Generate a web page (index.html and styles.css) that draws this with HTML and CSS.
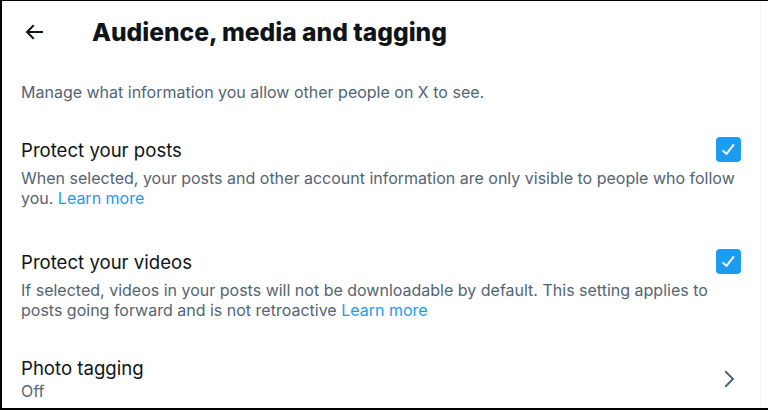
FILE: index.html
```html
<!DOCTYPE html>
<html lang="en">
<head>
  <meta charset="UTF-8">
  <meta name="viewport" content="width=device-width, initial-scale=1.0">
  <title>Audience, media and tagging</title>
  <link rel="stylesheet" href="styles.css">
</head>
<body>
  <div class="frame">
    <main class="column">

      <!-- Header -->
      <header class="page-header">
        <button class="back-button" aria-label="Back">
          <svg viewBox="0 0 24 24" width="24" height="24">
            <path d="M7.414 13l5.043 5.04-1.414 1.42L3.586 12l7.457-7.46 1.414 1.42L7.414 11H21v2H7.414z"></path>
          </svg>
        </button>
        <h1>Audience, media and tagging</h1>
      </header>

      <p class="intro">Manage what information you allow other people on X to see.</p>

      <!-- Protect posts -->
      <label class="setting">
        <div class="setting-head">
          <span class="setting-title">Protect your posts</span>
          <span class="checkbox">
            <svg viewBox="0 0 24 24" width="19" height="19">
              <path d="M9.64 18.952l-5.55-4.861 1.317-1.504 3.951 3.459 8.459-10.948L19.4 6.32 9.64 18.952z"></path>
            </svg>
          </span>
        </div>
        <p class="setting-desc">When selected, your posts and other account information are only visible to people who follow you. <a href="#">Learn more</a></p>
      </label>

      <!-- Protect videos -->
      <label class="setting">
        <div class="setting-head">
          <span class="setting-title">Protect your videos</span>
          <span class="checkbox">
            <svg viewBox="0 0 24 24" width="19" height="19">
              <path d="M9.64 18.952l-5.55-4.861 1.317-1.504 3.951 3.459 8.459-10.948L19.4 6.32 9.64 18.952z"></path>
            </svg>
          </span>
        </div>
        <p class="setting-desc">If selected, videos in your posts will not be downloadable by default. This setting applies to posts going forward and is not retroactive <a href="#">Learn more</a></p>
      </label>

      <!-- Photo tagging -->
      <a class="link-row" href="#">
        <div>
          <div class="setting-title">Photo tagging</div>
          <div class="link-value">Off</div>
        </div>
        <svg class="chevron" viewBox="0 0 24 24" width="24" height="24">
          <path d="M14.586 12L7.543 4.96l1.414-1.42L17.414 12l-8.457 8.46-1.414-1.42L14.586 12z"></path>
        </svg>
      </a>

    </main>
  </div>
</body>
</html>
```

FILE: styles.css
```css
/* General */
* {
  box-sizing: border-box;
}

body {
  margin: 0;
  font-family: 'Inter', 'Noto Sans', sans-serif;
  color: #0f1419;
  background: #fff;
}

.frame {
  height: 410px;
  border-top: 1px solid #000;
  border-left: 2px solid #000;
  border-bottom: 2px solid #000;
  overflow: hidden;
}

.column {
  width: 759px;
  height: 100%;
  border-right: 1px solid #eff3f4;
}

/* Header */
.page-header {
  display: flex;
  align-items: center;
  height: 62px;
  padding: 0 19px 0 12px;
}

.back-button {
  width: 40px;
  height: 40px;
  margin-right: 38px;
  padding: 0;
  border: none;
  background: none;
  display: flex;
  align-items: center;
  justify-content: center;
}

.back-button svg {
  fill: #0f1419;
}

.page-header h1 {
  margin: 0;
  font-size: 24.6px;
  font-weight: 800;
}

/* Intro text */
.intro {
  margin: 0;
  padding: 19px 19px 16px;
  font-size: 16px;
  color: #536471;
}

/* Setting rows */
.setting {
  display: block;
  padding: 19px 19px 22px;
  cursor: pointer;
}

.setting-head {
  display: flex;
  align-items: center;
  justify-content: space-between;
}

.setting-title {
  font-size: 18.6px;
}

.checkbox {
  width: 25px;
  height: 25px;
  border-radius: 4px;
  background: #1d9bf0;
  display: flex;
  align-items: center;
  justify-content: center;
}

.checkbox svg {
  fill: #fff;
  stroke: #fff;
  stroke-width: 0.6px;
}

.setting-desc {
  margin: 6px 0 0;
  font-size: 16px;
  line-height: 20px;
  color: #536471;
}

.setting-desc a {
  color: #1d9bf0;
  text-decoration: none;
}

/* Link row */
.link-row {
  display: flex;
  align-items: center;
  justify-content: space-between;
  padding: 15px 19px 12px;
  color: inherit;
  text-decoration: none;
}

.link-value {
  margin-top: 2px;
  font-size: 16px;
  color: #536471;
}

.chevron {
  fill: #536471;
}
```
